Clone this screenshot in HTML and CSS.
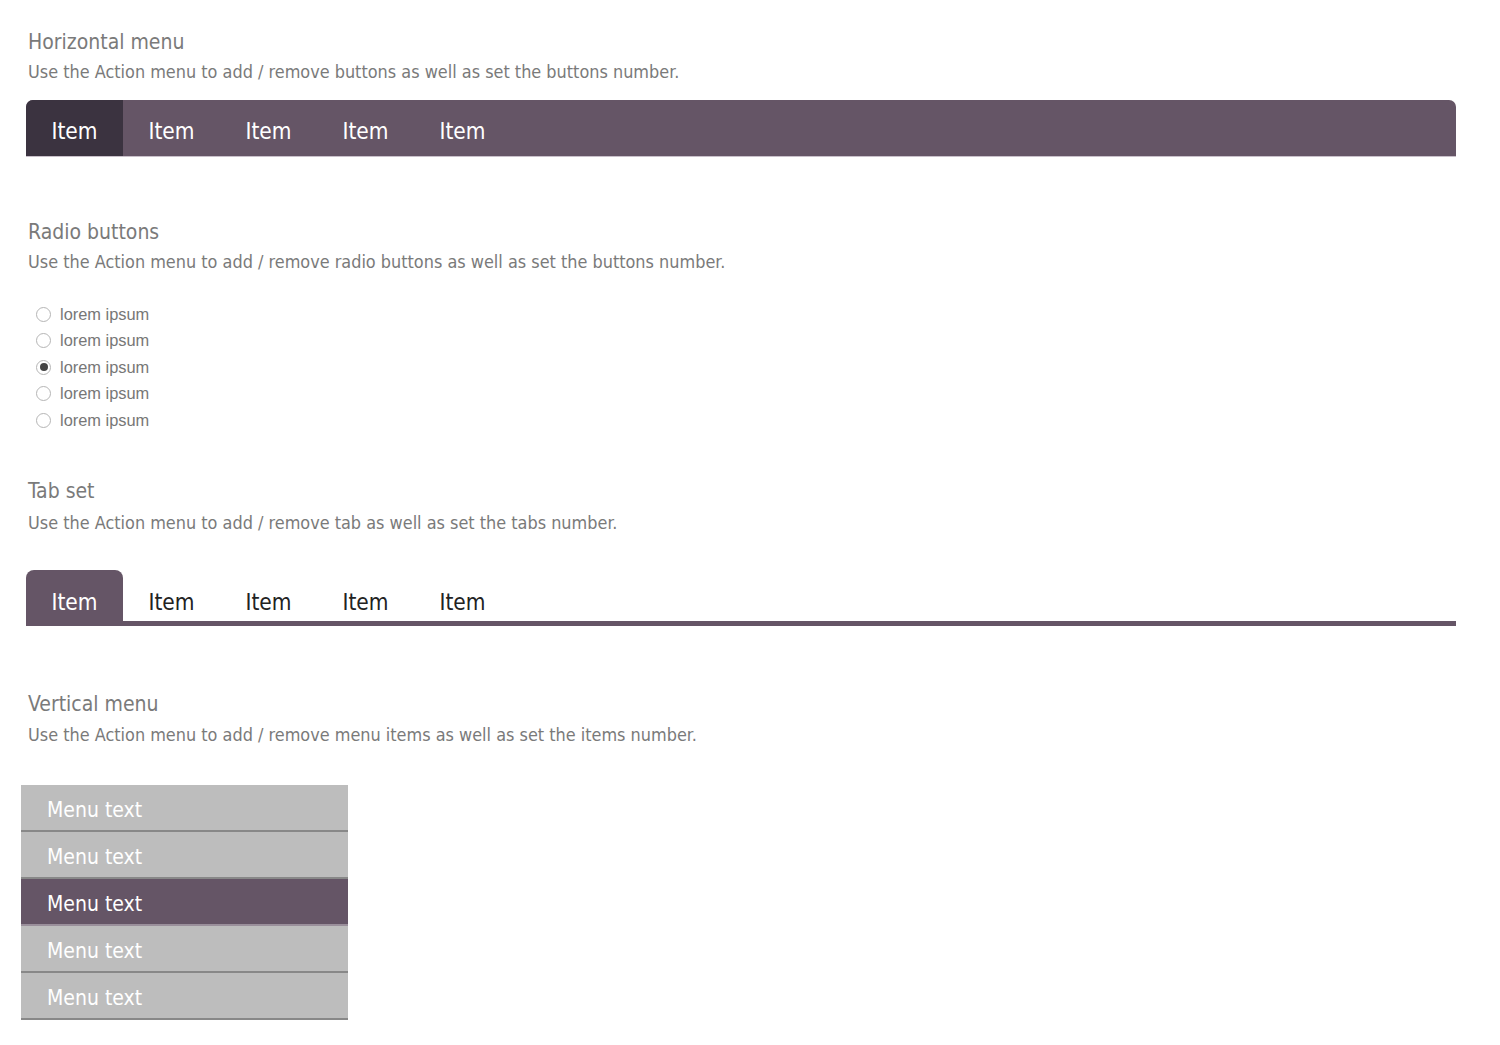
FILE: index.html
```html
<!DOCTYPE html>
<html>
<head>
<meta charset="utf-8">
<link rel="stylesheet" href="styles.css">
</head>
<body>
<div class="page">
  <section class="sec sec-hmenu">
    <h2 class="title">Horizontal menu</h2>
    <p class="sub">Use the Action menu to add / remove buttons as well as set the buttons number.</p>
    <nav class="hmenu">
      <div class="hitem active">Item</div>
      <div class="hitem">Item</div>
      <div class="hitem">Item</div>
      <div class="hitem">Item</div>
      <div class="hitem">Item</div>
    </nav>
  </section>

  <section class="sec sec-radio">
    <h2 class="title">Radio buttons</h2>
    <p class="sub">Use the Action menu to add / remove radio buttons as well as set the buttons number.</p>
    <div class="radios">
      <div class="radio"><span class="dot"></span><span class="rlabel">lorem ipsum</span></div>
      <div class="radio"><span class="dot"></span><span class="rlabel">lorem ipsum</span></div>
      <div class="radio checked"><span class="dot"></span><span class="rlabel">lorem ipsum</span></div>
      <div class="radio"><span class="dot"></span><span class="rlabel">lorem ipsum</span></div>
      <div class="radio"><span class="dot"></span><span class="rlabel">lorem ipsum</span></div>
    </div>
  </section>

  <section class="sec sec-tabs">
    <h2 class="title">Tab set</h2>
    <p class="sub">Use the Action menu to add / remove tab as well as set the tabs number.</p>
    <div class="tabs">
      <div class="tab active">Item</div>
      <div class="tab">Item</div>
      <div class="tab">Item</div>
      <div class="tab">Item</div>
      <div class="tab">Item</div>
    </div>
  </section>

  <section class="sec sec-vmenu">
    <h2 class="title">Vertical menu</h2>
    <p class="sub">Use the Action menu to add / remove menu items as well as set the items number.</p>
    <div class="vmenu">
      <div class="vitem">Menu text</div>
      <div class="vitem">Menu text</div>
      <div class="vitem active">Menu text</div>
      <div class="vitem">Menu text</div>
      <div class="vitem">Menu text</div>
    </div>
  </section>
</div>
</body>
</html>
```
FILE: styles.css
```css
html, body {
  margin: 0;
  padding: 0;
  background: #ffffff;
}
body {
  font-family: "DejaVu Sans Condensed", "DejaVu Sans", sans-serif;
  color: #777777;
}
.page {
  padding: 30px 0 0 26px;
  width: 1430px;
}
.title {
  margin: 0 0 0 2px;
  font-size: 21px;
  line-height: 24px;
  font-weight: normal;
  color: #7a7a7a;
}
.sub {
  margin: 8px 0 0 2px;
  font-size: 17.9px;
  line-height: 20px;
  color: #7a7a7a;
}
.sec-radio { margin-top: 64px; }
.sec-tabs { margin-top: 45px; }
.sec-vmenu { margin-top: 66px; }
.sec-tabs .sub { margin-top: 10px; }
.sec-vmenu .sub { margin-top: 9px; }

/* horizontal menu */
.hmenu {
  margin-top: 18px;
  display: flex;
  height: 56px;
  background: #655566;
  border-radius: 7px 7px 0 0;
  overflow: hidden;
  box-shadow: 0 1px 0 #c9c0ca;
}
.hitem {
  width: 97px;
  display: flex;
  align-items: center;
  justify-content: center;
  padding-top: 5px;
  box-sizing: border-box;
  color: #ffffff;
  font-size: 22.5px;
}
.hitem.active { background: #3b3340; }

/* radios */
.radios {
  margin-top: 29px;
  padding-left: 10px;
}
.radio {
  display: flex;
  align-items: center;
  height: 26.5px;
}
.dot {
  width: 15px;
  height: 15px;
  box-sizing: border-box;
  border: 1px solid #b5b5b5;
  border-radius: 50%;
  background: #ffffff;
  position: relative;
}
.radio.checked .dot::after {
  content: "";
  position: absolute;
  left: 2.5px;
  top: 2.5px;
  width: 8px;
  height: 8px;
  border-radius: 50%;
  background: #444444;
}
.rlabel {
  margin-left: 9px;
  font-family: "Liberation Sans", Arial, sans-serif;
  font-size: 16.4px;
  color: #777777;
}

/* tabs */
.tabs {
  margin-top: 37.5px;
  display: flex;
  height: 51px;
  border-bottom: 5px solid #655566;
}
.tab {
  width: 97px;
  display: flex;
  align-items: center;
  justify-content: center;
  padding-top: 12px;
  box-sizing: border-box;
  color: #222222;
  font-size: 22.5px;
}
.tab.active {
  background: #655566;
  color: #ffffff;
  border-radius: 8px 8px 0 0;
}

/* vertical menu */
.vmenu {
  margin-top: 40px;
  margin-left: -5px;
  width: 327px;
}
.vitem {
  height: 40px;
  padding-top: 5px;
  border-bottom: 2px solid #888888;
  background: #bdbdbd;
  color: #ffffff;
  font-size: 21px;
  display: flex;
  align-items: center;
  padding-left: 26px;
  box-sizing: content-box;
}
.vitem.active {
  background: #655566;
  border-bottom-color: #9a8f9b;
}
```
